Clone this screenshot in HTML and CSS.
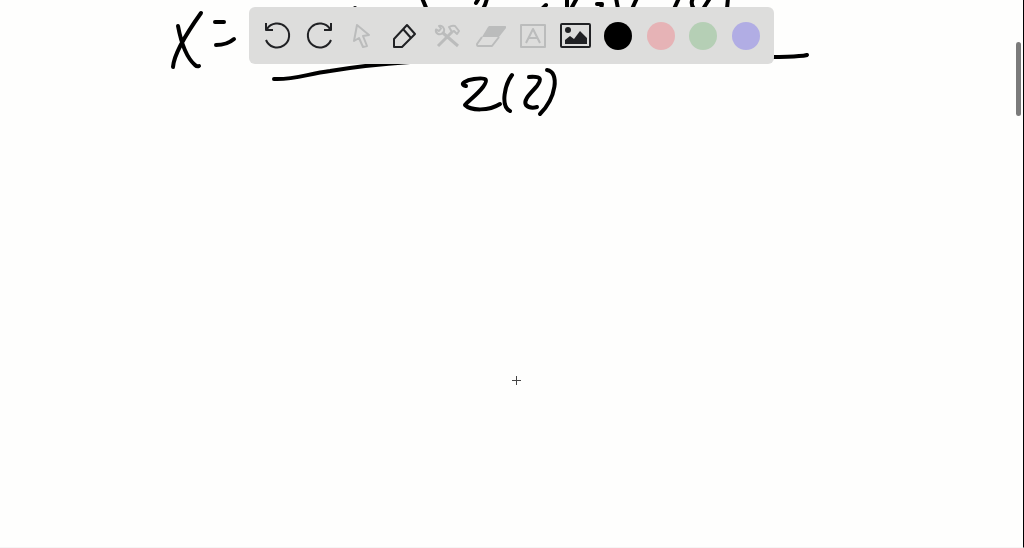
FILE: index.html
```html
<!DOCTYPE html>
<html lang="en">
<head>
  <meta charset="UTF-8" />
  <meta name="viewport" content="width=device-width, initial-scale=1" />
  <title>Whiteboard</title>
  <link rel="stylesheet" href="styles.css">
</head>
<body>
  <main class="board">
    <!-- handwritten strokes -->
    <svg class="ink" width="1024" height="548" viewBox="0 0 1024 548" role="img" aria-label="x = fraction over 2(2)">
      <path d="M178 26C181 42 187 58 195 65Q197 67 199 66M201 13C191 27 174 53 173 67" />
      <path d="M215 22H224M216 45Q227 45 234 39" />
      <path d="M274 79C294 80 307 74 330 71Q366 65 410 62" />
      <path d="M770 57Q790 57 799 56Q804 56 807 55" />
      <path d="M466 86C458 84 467 80 474 79C488 77 488 80 483 87C477 95 468 101 465 105C471 111 489 111 500 104" />
      <path d="M512 75C505 84 500 106 510 111" />
      <path d="M529 77C543 76 541 80 537 86C530 94 523 100 526 105Q530 109 537 107" />
      <path d="M547 70C560 72 556 98 540 114" />
      <path d="M355 8V9M422 -2L427 10M479 -2L476 3M487 -2Q486 4 483 9M542 9L546 5M567 -2V9M577 -2L571 9" />
      <path d="M597 4H602L601 9M616 -2L618 9M637 -2L632 9M679 -2L674 9M693 -2Q690 4 694 9M710 -2L703 9M728 -2L727 9" />
    </svg>

    <div class="toolbar" role="toolbar" aria-label="Drawing tools">
      <button class="tool" aria-label="Undo">
        <svg viewBox="0 0 32 32"><path d="M5 3V10H12M5 20A12 12 0 1 0 6 9" /></svg>
      </button>
      <button class="tool" aria-label="Redo">
        <svg viewBox="0 0 32 32"><path d="M27 3V10H20M27 20A12 12 0 1 1 26 9" /></svg>
      </button>
      <button class="tool faded" aria-label="Select">
        <svg viewBox="0 0 32 32"><path d="M11 5L8 21L13 18L17 27L21 26L17 16L23 15Z" /></svg>
      </button>
      <button class="tool" aria-label="Pen">
        <svg viewBox="0 0 32 32"><path d="M5 27V19L18 5L26 14L13 27ZM14 9L22 18" /></svg>
      </button>
      <button class="tool faded" aria-label="Tools">
        <svg viewBox="0 0 32 32">
          <path d="M7 6L9 8.500L7 11L4 9.500C3 13 7 15.500 10 13.500L12 11.500C13 8 10 5 7 6Z" />
          <path d="M17 7Q20 5 23 6L27 11L25 14L22 11L20 12Z" />
          <path class="handle" d="M11 13L26 26M20 12L6 26" />
        </svg>
      </button>
      <button class="tool faded" aria-label="Eraser">
        <svg viewBox="0 0 32 32">
          <path class="solid" d="M15 6H31Q33 6 32 8L25 17H8L14 7Z" />
          <path d="M8 17L3 24Q3 26 4 26H18L25 17" />
        </svg>
      </button>
      <button class="tool faded" aria-label="Text">
        <svg viewBox="0 0 32 32"><path d="M4 5H28V27H4ZM9 23L16 9L23 23M11 18H21" /></svg>
      </button>
      <button class="tool" aria-label="Image">
        <svg viewBox="0 0 32 32">
          <rect x="2" y="4" width="29" height="23" rx="1" />
          <circle class="solid" cx="9" cy="10" r="3" />
          <path class="solid" d="M6 24V20L11 16L15 19L21 11L28 18V24Z" />
        </svg>
      </button>
      <button class="swatch black" aria-label="Black"></button>
      <button class="swatch red" aria-label="Red"></button>
      <button class="swatch green" aria-label="Green"></button>
      <button class="swatch blue" aria-label="Blue"></button>
    </div>

    <svg class="crosshair" viewBox="0 0 9 9" aria-hidden="true"><path d="M0 4.500H9M4.500 0V9" /></svg>
    <div class="scroll-thumb"></div>
  </main>
</body>
</html>
```
FILE: styles.css
```css
* {
  box-sizing: border-box;
}

body {
  margin: 0;
  font-family: "Liberation Sans", Arial, sans-serif;
}

.board {
  position: relative;
  min-height: 100vh;
  padding-top: 7px;
  overflow: hidden;
  background: #fefefd;
  border-right: 1px solid #000;
  border-bottom: 1px solid #f5f5f5;
}

.ink {
  position: absolute;
  top: 0;
  left: 0;
  fill: none;
  stroke: #000;
  stroke-width: 4;
  stroke-linecap: round;
  stroke-linejoin: round;
}

.toolbar {
  position: relative;
  display: grid;
  grid-template-columns: repeat(12, 1fr);
  align-items: center;
  justify-items: center;
  width: 525px;
  height: 57px;
  margin: 0 auto;
  padding: 0 7px;
  background: #dddddc;
  border-radius: 6px;
}

.tool,
.swatch {
  padding: 0;
  border: 0;
  cursor: pointer;
}

.tool {
  width: 32px;
  height: 32px;
  background: none;
  color: #202124;
}

.tool svg {
  display: block;
  width: 32px;
  height: 32px;
  fill: none;
  stroke: currentColor;
  stroke-width: 2;
  stroke-linejoin: round;
}

.tool .solid {
  fill: currentColor;
  stroke: none;
}

.tool .handle {
  stroke-width: 3;
}

.faded {
  color: #bbbcbc;
}

.swatch {
  width: 28px;
  height: 28px;
  border-radius: 50%;
}

.black {
  background: #000;
}

.red {
  background: #e6b3b6;
}

.green {
  background: #b5cfb5;
}

.blue {
  background: #b1ade4;
}

.crosshair {
  position: absolute;
  top: 376px;
  left: 512px;
  width: 9px;
  height: 9px;
  stroke: #444;
}

.scroll-thumb {
  position: absolute;
  top: 42px;
  right: 2px;
  width: 5px;
  height: 74px;
  background: #7b7b7b;
  border-radius: 3px;
}
```
